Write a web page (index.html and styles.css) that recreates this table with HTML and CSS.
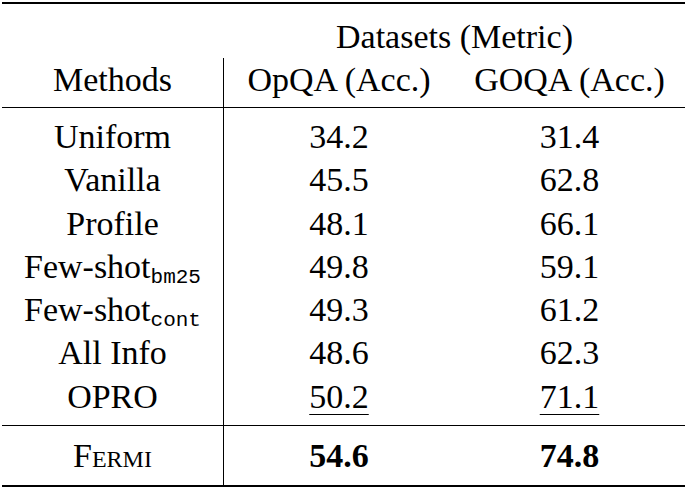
FILE: index.html
```html
<!DOCTYPE html>
<html lang="en">
<head>
<meta charset="utf-8">
<title>Results table</title>
<link rel="stylesheet" href="styles.css">
</head>
<body>
<div class="wrap">
<table class="results">
  <colgroup>
    <col class="c-method">
    <col class="c-opqa">
    <col class="c-goqa">
  </colgroup>
  <thead>
    <tr class="h1">
      <th></th>
      <th colspan="2">Datasets (Metric)</th>
    </tr>
    <tr class="h2">
      <th class="m">Methods</th>
      <th>OpQA (Acc.)</th>
      <th>GOQA (Acc.)</th>
    </tr>
  </thead>
  <tbody>
    <tr class="first"><td class="m">Uniform</td><td>34.2</td><td>31.4</td></tr>
    <tr><td class="m">Vanilla</td><td>45.5</td><td>62.8</td></tr>
    <tr><td class="m">Profile</td><td>48.1</td><td>66.1</td></tr>
    <tr><td class="m">Few-shot<span class="sub">bm25</span></td><td>49.8</td><td>59.1</td></tr>
    <tr><td class="m">Few-shot<span class="sub">cont</span></td><td>49.3</td><td>61.2</td></tr>
    <tr><td class="m">All Info</td><td>48.6</td><td>62.3</td></tr>
    <tr class="last"><td class="m">OPRO</td><td><span class="ul">50.2</span></td><td><span class="ul">71.1</span></td></tr>
  </tbody>
  <tfoot>
    <tr class="ours"><td class="m"><span class="sc">Fermi</span></td><td class="b">54.6</td><td class="b">74.8</td></tr>
  </tfoot>
</table>
</div>
</body>
</html>
```

FILE: styles.css
```css
html, body {
  margin: 0;
  padding: 0;
  background: #ffffff;
}

.wrap {
  padding: 2px 0 0 2px;
}

.results {
  border-collapse: separate;
  border-spacing: 0;
  table-layout: fixed;
  width: 683px;
  color: #000;
}

.c-method { width: 222px; }
.c-opqa { width: 230px; }
.c-goqa { width: 231px; }

.results th,
.results td {
  padding: 0;
  text-align: center;
  font-family: "Liberation Serif", "Times New Roman", serif;
  font-size: 34px;
  font-weight: normal;
  white-space: nowrap;
  line-height: 43.3px;
}

.results .h1 th {
  border-top: 2px solid #000;
  padding-top: 11px;
  line-height: 43px;
}

.results .h2 th {
  line-height: 43px;
  padding-bottom: 6px;
  border-bottom: 1px solid #000;
}

.results .m {
  border-right: 1px solid #000;
}

.results .first td {
  padding-top: 7px;
}

.results .last td {
  padding-bottom: 6.5px;
  border-bottom: 1px solid #000;
}

.results .ours td {
  padding-top: 8px;
  padding-bottom: 8px;
  line-height: 43px;
  border-bottom: 2px solid #000;
}

.results .sub {
  font-family: "Liberation Mono", "Courier New", monospace;
  font-size: 21px;
  line-height: 0;
  vertical-align: -5px;
}

.results .ul {
  text-decoration: underline;
  text-decoration-thickness: 1px;
  text-underline-offset: 6px;
}

.results .b {
  font-weight: bold;
}

.results .sc {
  font-variant: small-caps;
}
```
